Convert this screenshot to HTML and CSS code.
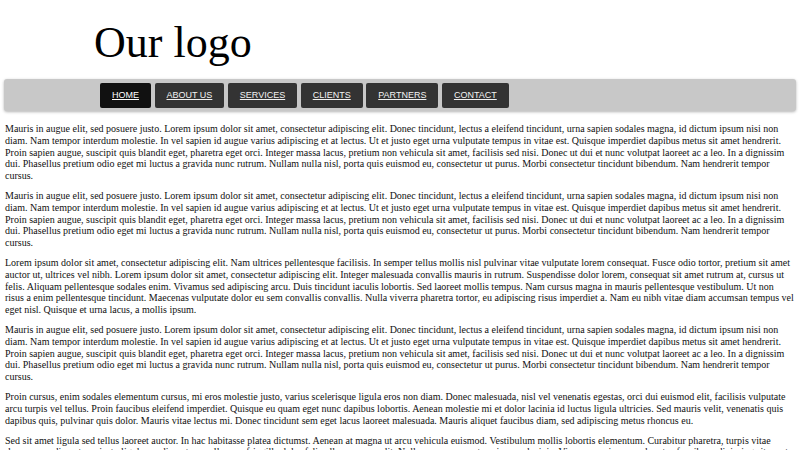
FILE: index.html
```html
<!DOCTYPE html>
<html lang="en">

<head>
    <meta charset="UTF-8">
    <title>Our logo</title>
    <link rel="stylesheet" href="styles.css">
</head>

<body>

    <div id="header">
        <h1>Our logo</h1>
    </div>

    <ul id="menu">
        <li><a href="#" class="active">HOME</a></li>
        <li><a href="#">ABOUT US</a></li>
        <li><a href="#">SERVICES</a></li>
        <li><a href="#">CLIENTS</a></li>
        <li><a href="#">PARTNERS</a></li>
        <li><a href="#">CONTACT</a></li>
    </ul>

    <div id="content">
        <p>Mauris in augue elit, sed posuere justo. Lorem ipsum dolor sit amet, consectetur adipiscing elit. Donec tincidunt, lectus a eleifend tincidunt, urna sapien sodales magna, id dictum ipsum nisi non diam. Nam tempor interdum molestie. In vel sapien id augue varius adipiscing et at lectus. Ut et justo eget urna vulputate tempus in vitae est. Quisque imperdiet dapibus metus sit amet hendrerit. Proin sapien augue, suscipit quis blandit eget, pharetra eget orci. Integer massa lacus, pretium non vehicula sit amet, facilisis sed nisi. Donec ut dui et nunc volutpat laoreet ac a leo. In a dignissim dui. Phasellus pretium odio eget mi luctus a gravida nunc rutrum. Nullam nulla nisl, porta quis euismod eu, consectetur ut purus. Morbi consectetur tincidunt bibendum. Nam hendrerit tempor cursus.</p>
        <p>Mauris in augue elit, sed posuere justo. Lorem ipsum dolor sit amet, consectetur adipiscing elit. Donec tincidunt, lectus a eleifend tincidunt, urna sapien sodales magna, id dictum ipsum nisi non diam. Nam tempor interdum molestie. In vel sapien id augue varius adipiscing et at lectus. Ut et justo eget urna vulputate tempus in vitae est. Quisque imperdiet dapibus metus sit amet hendrerit. Proin sapien augue, suscipit quis blandit eget, pharetra eget orci. Integer massa lacus, pretium non vehicula sit amet, facilisis sed nisi. Donec ut dui et nunc volutpat laoreet ac a leo. In a dignissim dui. Phasellus pretium odio eget mi luctus a gravida nunc rutrum. Nullam nulla nisl, porta quis euismod eu, consectetur ut purus. Morbi consectetur tincidunt bibendum. Nam hendrerit tempor cursus.</p>
        <p>Lorem ipsum dolor sit amet, consectetur adipiscing elit. Nam ultrices pellentesque facilisis. In semper tellus mollis nisl pulvinar vitae vulputate lorem consequat. Fusce odio tortor, pretium sit amet auctor ut, ultrices vel nibh. Lorem ipsum dolor sit amet, consectetur adipiscing elit. Integer malesuada convallis mauris in rutrum. Suspendisse dolor lorem, consequat sit amet rutrum at, cursus ut felis. Aliquam pellentesque sodales enim. Vivamus sed adipiscing arcu. Duis tincidunt iaculis lobortis. Sed laoreet mollis tempus. Nam cursus magna in mauris pellentesque vestibulum. Ut non risus a enim pellentesque tincidunt. Maecenas vulputate dolor eu sem convallis convallis. Nulla viverra pharetra tortor, eu adipiscing risus imperdiet a. Nam eu nibh vitae diam accumsan tempus vel eget nisl. Quisque et urna lacus, a mollis ipsum.</p>
        <p>Mauris in augue elit, sed posuere justo. Lorem ipsum dolor sit amet, consectetur adipiscing elit. Donec tincidunt, lectus a eleifend tincidunt, urna sapien sodales magna, id dictum ipsum nisi non diam. Nam tempor interdum molestie. In vel sapien id augue varius adipiscing et at lectus. Ut et justo eget urna vulputate tempus in vitae est. Quisque imperdiet dapibus metus sit amet hendrerit. Proin sapien augue, suscipit quis blandit eget, pharetra eget orci. Integer massa lacus, pretium non vehicula sit amet, facilisis sed nisi. Donec ut dui et nunc volutpat laoreet ac a leo. In a dignissim dui. Phasellus pretium odio eget mi luctus a gravida nunc rutrum. Nullam nulla nisl, porta quis euismod eu, consectetur ut purus. Morbi consectetur tincidunt bibendum. Nam hendrerit tempor cursus.</p>
        <p>Proin cursus, enim sodales elementum cursus, mi eros molestie justo, varius scelerisque ligula eros non diam. Donec malesuada, nisl vel venenatis egestas, orci dui euismod elit, facilisis vulputate arcu turpis vel tellus. Proin faucibus eleifend imperdiet. Quisque eu quam eget nunc dapibus lobortis. Aenean molestie mi et dolor lacinia id luctus ligula ultricies. Sed mauris velit, venenatis quis dapibus quis, pulvinar quis dolor. Mauris vitae lectus mi. Donec tincidunt sem eget lacus laoreet malesuada. Mauris aliquet faucibus diam, sed adipiscing metus rhoncus eu.</p>
        <p>Sed sit amet ligula sed tellus laoreet auctor. In hac habitasse platea dictumst. Aenean at magna ut arcu vehicula euismod. Vestibulum mollis lobortis elementum. Curabitur pharetra, turpis vitae rhoncus condimentum, justo ligula condimentum nulla, non fringilla dolor felis ullamcorper velit. Nullam posuere porta enim non lacinia. Vivamus eu ipsum vel metus faucibus adipiscing sit amet.</p>
    </div>

</body>

</html>
```

FILE: styles.css
```css
body {
    margin: 0;
    font-family: 'Liberation Serif', 'Times New Roman', serif;
    color: #111;
    background: #fff;
}

#header {
    padding-left: 94px;
}

h1 {
    margin: 17px 0 10px;
    font-size: 44px;
    font-weight: normal;
    line-height: 52px;
    color: #000;
}

#menu {
    display: flex;
    gap: 3.5px;
    list-style: none;
    margin: 0 4px;
    padding: 4px 0 3px 96px;
    background: #c8c8c8;
    border-radius: 3px;
    box-shadow: 0 1px 3px rgba(0, 0, 0, 0.3);
}

#menu a {
    display: block;
    height: 25px;
    line-height: 25px;
    padding: 0 12px;
    background: #333;
    color: #f2f2f2;
    font-family: 'Liberation Sans', Arial, sans-serif;
    font-size: 9px;
    border-radius: 2px;
}

#menu a.active {
    background: #111;
    color: #fff;
}

#content {
    padding: 12px 5px 0;
}

#content p {
    margin: 0 0 8.25px;
    font-size: 10px;
    line-height: 11.75px;
}
```
